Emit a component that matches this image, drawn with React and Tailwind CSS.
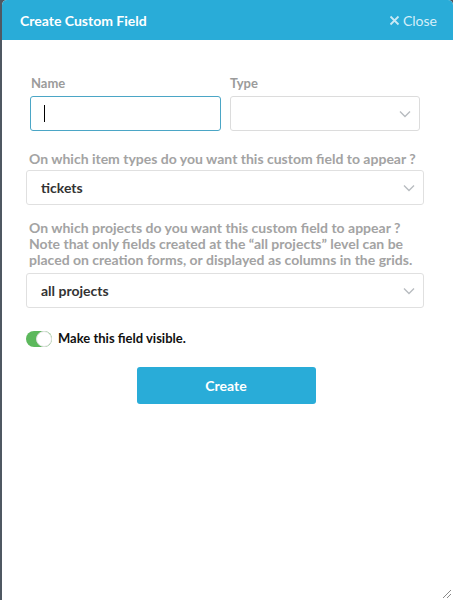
import React from "react";

const Chevron = () => (
  <svg width="12" height="8" viewBox="0 0 12 8" fill="none" className="shrink-0">
    <path d="M1 1.5L6 6.5L11 1.5" stroke="#b8bcc0" strokeWidth="1.4" />
  </svg>
);

export default function App() {
  return (
    <div
      className="w-[453px] h-[600px] bg-[#4f5862] flex overflow-hidden"
      style={{ fontFamily: "Lato, 'Open Sans', sans-serif" }}
    >
      <div className="ml-[2px] flex-1 flex flex-col bg-white rounded-t-[5px] overflow-hidden relative">
        <div className="h-[40px] bg-[#29acd8] flex items-center justify-between pl-[18px] pr-[16px] shrink-0">
          <span className="text-white font-bold text-[14px]">Create Custom Field</span>
          <span className="text-[#d6eff8] text-[14px] flex items-center gap-[3px]">
            <svg width="11" height="11" viewBox="0 0 11 11">
              <path d="M1.5 1.5L9.5 9.5M9.5 1.5L1.5 9.5" stroke="#c9e9f5" strokeWidth="1.8" />
            </svg>
            Close
          </span>
        </div>
        <div className="flex flex-col pl-[24px] pr-[29px] pt-[35px]">
          <div className="flex gap-[9px] pl-[4px] pr-[4px]">
            <div className="flex flex-col w-[191px]">
              <span className="text-[#9b9b9b] font-bold text-[13px] leading-[16px] pl-[1px] mb-[5px]">Name</span>
              <div className="h-[35px] border border-[#4ba6c6] rounded-[3px] flex items-center pl-[13px]">
                <div className="w-[1px] h-[17px] bg-black" />
              </div>
            </div>
            <div className="flex flex-col flex-1">
              <span className="text-[#9b9b9b] font-bold text-[13px] leading-[16px] mb-[5px]">Type</span>
              <div className="h-[35px] border border-[#dcdcdc] rounded-[3px] flex items-center justify-end pr-[8px]">
                <Chevron />
              </div>
            </div>
          </div>
          <div className="text-[#a3a3a3] font-bold text-[14px] leading-[16px] pl-[3px] mt-[20px] mb-[3px]">
            On which item types do you want this custom field to appear ?
          </div>
          <div className="h-[35px] border border-[#e0e0e0] rounded-[3px] flex items-center justify-between pl-[14px] pr-[8px]">
            <span className="text-[#333] font-bold text-[14px]">tickets</span>
            <Chevron />
          </div>
          <div className="text-[#a3a3a3] font-bold text-[14px] leading-[16px] pl-[3px] mt-[15px] mb-[5px]">
            On which projects do you want this custom field to appear ?<br />
            Note that only fields created at the “all projects” level can be placed on creation forms, or displayed as columns in the grids.
          </div>
          <div className="h-[35px] border border-[#e0e0e0] rounded-[3px] flex items-center justify-between pl-[14px] pr-[8px]">
            <span className="text-[#333] font-bold text-[14px]">all projects</span>
            <Chevron />
          </div>
          <div className="flex items-center gap-[6px] mt-[21px]">
            <div className="w-[26px] h-[16px] rounded-full bg-[#5cb85c] relative">
              <div className="absolute right-0 top-0 w-[16px] h-[16px] rounded-full bg-white border border-[#e2e2e2]" />
            </div>
            <span className="text-[#111] font-bold text-[13px]">Make this field visible.</span>
          </div>
          <div className="flex justify-center mt-[18px] pl-[2px]">
            <div className="w-[179px] h-[37px] bg-[#29acd8] rounded-[3px] flex items-center justify-center text-white font-bold text-[14px]">
              Create
            </div>
          </div>
        </div>
        <svg className="absolute right-[1px] bottom-[1px]" width="12" height="12" viewBox="0 0 12 12">
          <path d="M11 3L3 11M11 7L7 11" stroke="#8a8a8a" strokeWidth="1" />
        </svg>
      </div>
    </div>
  );
}
